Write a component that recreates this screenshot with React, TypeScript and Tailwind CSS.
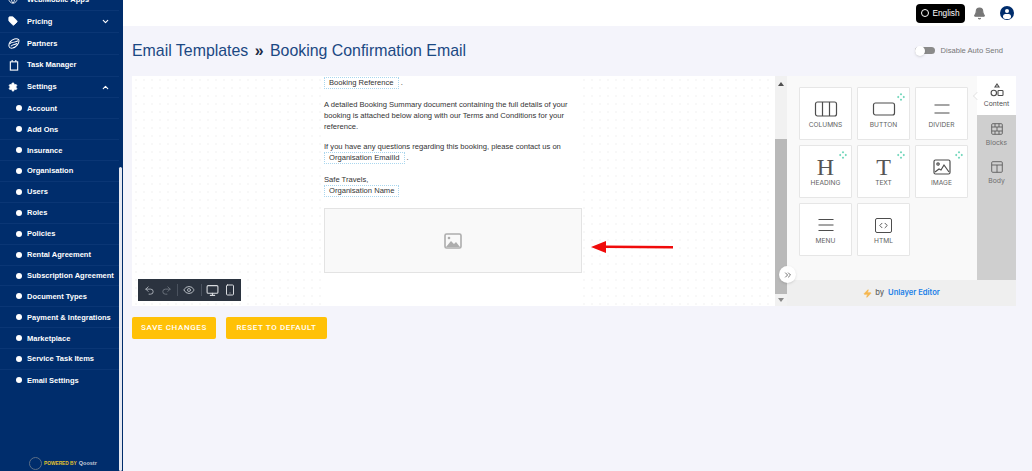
import { useState } from "react";
import { Bell, ChevronDown, ChevronUp, ChevronsRight, Code, Eye, Globe, Monitor, Redo2, Settings, Smartphone, Tag, Undo2, Zap } from "lucide-react";

const subItems = [
  "Account",
  "Add Ons",
  "Insurance",
  "Organisation",
  "Users",
  "Roles",
  "Policies",
  "Rental Agreement",
  "Subscription Agreement",
  "Document Types",
  "Payment & Integrations",
  "Marketplace",
  "Service Task Items",
  "Email Settings",
];

function NavRow({ icon, label, chevron }: { icon: React.ReactNode; label: string; chevron?: "up" | "down" }) {
  return (
    <div className="flex h-[21.9px] items-center border-b border-[#0a3675] pl-[8px] pr-[4px]">
      <span className="flex w-[18px] shrink-0 justify-start">{icon}</span>
      <span className="ml-[1px] flex-1 text-[7.5px] font-bold whitespace-nowrap text-white">{label}</span>
      {chevron === "down" && <ChevronDown className="mr-[5px] h-[9px] w-[9px] text-white" strokeWidth={3} />}
      {chevron === "up" && <ChevronUp className="mr-[5px] h-[9px] w-[9px] text-white" strokeWidth={3} />}
    </div>
  );
}

function Sidebar() {
  return (
    <aside className="relative flex h-[471px] w-[123px] shrink-0 flex-col overflow-hidden bg-[#002d6c]">
      <div className="-mt-[11px] w-[119px]">
        <NavRow icon={<Globe className="h-[10px] w-[10px] text-white" />} label="Web/Mobile Apps" />
        <NavRow icon={<Tag className="h-[10px] w-[10px] fill-white text-white" />} label="Pricing" chevron="down" />
        <NavRow
          icon={
            <svg viewBox="0 0 13 12" className="h-[11px] w-[12px] text-white" fill="none" stroke="currentColor" strokeWidth="1.1">
              <path d="M1 9c-.5-3 2-7 6-8 2.500-.5 5 0 5 2 0 3-3 7-7 8-2 .4-3.600-.4-4-2z" />
              <path d="M2 6c3-2 6-1 9-3M3 9c2-2 5-2 7-3" />
            </svg>
          }
          label="Partners"
        />
        <NavRow
          icon={
            <svg viewBox="0 0 10 12" className="ml-[1px] h-[11px] w-[10px] text-white" fill="none" stroke="currentColor" strokeWidth="1.2">
              <rect x="1" y="2" width="8" height="9" />
              <path d="M3 0v2M7 0v2" />
            </svg>
          }
          label="Task Manager"
        />
        <NavRow icon={<Settings className="h-[10px] w-[10px] fill-white text-white" />} label="Settings" chevron="up" />
        {subItems.map((item) => (
          <div key={item} className="flex h-[20.9px] items-center border-b border-[#0a3675] pl-[16px] last:border-b-0">
            <span className="h-[6px] w-[6px] rounded-full bg-white" />
            <span className="ml-[5px] text-[7.5px] font-bold whitespace-nowrap text-white">{item}</span>
          </div>
        ))}
      </div>
      <div className="absolute top-[167px] right-[1px] h-[304px] w-[3px] rounded-full bg-[#e6e8f0]" />
      <div className="absolute bottom-[1px] left-[29px] flex items-center gap-[2px]">
        <span className="h-[13px] w-[13px] rounded-full border border-[#5d6f86]" />
        <span className="text-[4.8px] font-bold text-[#e3c12d]">POWERED BY</span>
        <span className="text-[5.5px] font-bold text-[#c4cbd6]">Qoostr</span>
      </div>
    </aside>
  );
}

function Spark() {
  return (
    <svg viewBox="0 0 8 8" className="absolute top-[5px] right-[4px] h-[8px] w-[8px] text-[#63d2b4]" fill="currentColor">
      <path d="M1.200 2.800l1.200 1.200-1.200 1.200L0 4zM4 0l1.200 1.200L4 2.400 2.800 1.200zM6.800 2.800L8 4 6.800 5.200 5.600 4zM4 5.600l1.200 1.200L4 8 2.800 6.800z" />
    </svg>
  );
}

const tileStroke = { fill: "none", stroke: "#4d4d4d", strokeWidth: 1.2 };

const tiles: { label: string; spark?: boolean; icon: React.ReactNode }[] = [
  {
    label: "COLUMNS",
    icon: (
      <svg viewBox="0 0 24 16" className="h-[16px] w-[24px]" {...tileStroke}>
        <rect x="1.500" y="1" width="21" height="14" rx="2" />
        <path d="M8.500 1v14M15.500 1v14" />
      </svg>
    ),
  },
  {
    label: "BUTTON",
    spark: true,
    icon: (
      <svg viewBox="0 0 24 16" className="h-[16px] w-[24px]" {...tileStroke}>
        <rect x="1.500" y="2" width="21" height="12" rx="2" />
      </svg>
    ),
  },
  {
    label: "DIVIDER",
    icon: (
      <svg viewBox="0 0 24 16" className="h-[16px] w-[24px]" {...tileStroke}>
        <path d="M4.500 4h15M4.500 12h15" />
      </svg>
    ),
  },
  {
    label: "HEADING",
    spark: true,
    icon: <span className="font-['Liberation_Serif',serif] text-[24px] leading-[22px] text-[#555555]">H</span>,
  },
  {
    label: "TEXT",
    spark: true,
    icon: <span className="font-['Liberation_Serif',serif] text-[24px] leading-[22px] text-[#555555]">T</span>,
  },
  {
    label: "IMAGE",
    spark: true,
    icon: (
      <svg viewBox="0 0 18 16" className="h-[16px] w-[18px]" {...tileStroke}>
        <rect x="1" y="1" width="16" height="14" rx="1.500" />
        <circle cx="5" cy="5" r="1.200" />
        <path d="M2 13l4-3 2 1 3-5 5 7" />
      </svg>
    ),
  },
  {
    label: "MENU",
    icon: (
      <svg viewBox="0 0 24 16" className="h-[16px] w-[24px]" {...tileStroke}>
        <path d="M4.500 2.500h15M4.500 8h15M4.500 13.500h15" />
      </svg>
    ),
  },
  {
    label: "HTML",
    icon: (
      <span className="flex h-[15px] w-[17px] items-center justify-center rounded-[2px] border-[1.2px] border-[#4d4d4d]">
        <Code className="h-[9px] w-[9px] text-[#4d4d4d]" strokeWidth={2.4} />
      </span>
    ),
  },
];

function Tile({ label, spark, icon }: { label: string; spark?: boolean; icon: React.ReactNode }) {
  return (
    <div className="relative flex h-[53px] w-[53px] flex-col items-center justify-start rounded-[1px] border border-[#e6e6e6] bg-white pt-[13px]">
      {spark && <Spark />}
      <div className="flex h-[16px] items-center justify-center">{icon}</div>
      <span className="mt-[4px] text-[6.6px] leading-[8px] text-[#5f5f5f]">{label}</span>
    </div>
  );
}

function ToolPanel() {
  return (
    <div className="relative flex h-[230px] w-[229px] shrink-0 flex-col font-['Inter',sans-serif]">
      <div className="flex h-[204px]">
        <div className="grid flex-1 grid-cols-[repeat(3,53px)] content-start gap-x-[5px] gap-y-[5px] bg-[#f9f9f9] pt-[11px] pl-[12px]">
          {tiles.map((t) => (
            <Tile key={t.label} {...t} />
          ))}
        </div>
        <div className="w-[39px] shrink-0 bg-[#cfcfcf]">
          <div className="relative flex h-[39px] flex-col items-center bg-white pt-[7px]">
            <span className="absolute top-[17px] -left-[3px] h-[6px] w-[6px] rotate-45 border-b border-l border-[#e6e6e6] bg-white" />
            <svg viewBox="0 0 14 14" className="h-[14px] w-[14px]" fill="none" stroke="#4d4d4d" strokeWidth="1.100">
              <path d="M7 1l2 3H5z" />
              <circle cx="3.800" cy="10" r="2.700" />
              <rect x="8" y="7.500" width="5" height="5" rx="0.800" />
            </svg>
            <span className="mt-[3px] text-[6.8px] leading-[8px] text-[#505050]">Content</span>
          </div>
          <div className="flex h-[38px] flex-col items-center pt-[8px]">
            <svg viewBox="0 0 12 12" className="h-[12px] w-[12px]" fill="none" stroke="#5c5c5c" strokeWidth="0.900">
              <rect x="0.700" y="0.700" width="10.600" height="10.600" rx="1" />
              <path d="M0.700 4h10.600M0.700 8h10.600M4 0.700V4M8 0.700V4M6 4v4M4 8v3.300M8 8v3.300" />
            </svg>
            <span className="mt-[4px] text-[6.8px] leading-[8px] text-[#707070]">Blocks</span>
          </div>
          <div className="flex h-[38px] flex-col items-center pt-[8px]">
            <svg viewBox="0 0 12 12" className="h-[12px] w-[12px]" fill="none" stroke="#5c5c5c" strokeWidth="0.900">
              <rect x="0.700" y="0.700" width="10.600" height="10.600" rx="1" />
              <path d="M0.700 4h10.600M6 4v7.300" />
            </svg>
            <span className="mt-[4px] text-[6.8px] leading-[8px] text-[#707070]">Body</span>
          </div>
        </div>
      </div>
      <div className="flex h-[26px] items-center justify-center gap-[3px] bg-[#efefef] text-[7.6px]">
        <Zap className="h-[9px] w-[9px] fill-[#f5b74f] text-[#f5b74f]" />
        <span className="font-medium text-[#666666]">by</span>
        <span className="ml-[1px] font-semibold text-[#2080e8]">Unlayer Editor</span>
      </div>
    </div>
  );
}

function Token({ children }: { children: React.ReactNode }) {
  return (
    <span className="inline-block border border-dotted border-[#a9d6ee] px-[4px] leading-[10px] text-[#333333]">{children}</span>
  );
}

function Canvas() {
  return (
    <div className="relative h-[230px] flex-1 overflow-hidden bg-white bg-[radial-gradient(#f8f8f8_1px,transparent_1px)] bg-[length:8px_8px]">
      <div className="ml-[192px] h-full w-[258px] bg-white font-['Liberation_Sans',sans-serif] text-[7.6px] leading-[10.8px] text-[#333333]">
        <div className="pt-[1px]">
          <Token>Booking Reference</Token> .
        </div>
        <p className="mt-[11px]">
          A detailed Booking Summary document containing the full details of your booking is attached below along with our Terms and Conditions for your reference.
        </p>
        <p className="mt-[9.5px]">If you have any questions regarding this booking, please contact us on</p>
        <div className="-mt-[1px]">
          <Token>Organisation EmailId</Token> .
        </div>
        <p className="mt-[11px]">Safe Travels,</p>
        <div>
          <Token>Organisation Name</Token>
        </div>
        <div className="mt-[11px] flex h-[65px] items-center justify-center border border-[#e3e3e3] bg-[#f9f9f9]">
          <svg viewBox="0 0 18 16" className="h-[16px] w-[18px]" fill="none" stroke="#adadad" strokeWidth="1.600">
            <rect x="1" y="1" width="16" height="14" rx="1.500" />
            <circle cx="5" cy="5" r="1.300" fill="#adadad" stroke="none" />
            <path d="M2 14l5-6 3 3 2-2 4 5z" fill="#adadad" stroke="none" />
          </svg>
        </div>
      </div>
      {/* undo / preview toolbar */}
      <div className="absolute top-[203px] left-[6px] flex h-[22px] w-[103px] items-center bg-[#2b333f] pl-[6px]">
        <Undo2 className="h-[11px] w-[11px] text-[#aeb4bb]" />
        <Redo2 className="ml-[6px] h-[11px] w-[11px] text-[#6e7680]" />
        <span className="ml-[5px] h-[12px] w-px bg-[#4a525e]" />
        <Eye className="ml-[5px] h-[12px] w-[12px] text-[#aeb4bb]" />
        <span className="ml-[6px] h-[12px] w-px bg-[#4a525e]" />
        <Monitor className="ml-[4px] h-[13px] w-[13px] text-[#d8dbdf]" />
        <Smartphone className="ml-[5px] h-[12px] w-[12px] text-[#d8dbdf]" />
      </div>
    </div>
  );
}

export default function App() {
  const [autoSend] = useState(false);

  return (
    <div className="flex h-[471px] w-[1032px] overflow-hidden bg-[#f4f4fb] font-['Liberation_Sans',sans-serif]">
      <Sidebar />
      <div className="relative flex min-w-0 flex-1 flex-col">
        <header className="flex h-[26px] items-center justify-end bg-white pr-[18px]">
          <div className="flex h-[19px] w-[49px] items-center justify-center gap-[3px] rounded-[4px] bg-black text-[8.3px] text-white">
            <span className="h-[8px] w-[8px] rounded-full border-[1.5px] border-white" />
            English
          </div>
          <Bell className="ml-[8px] h-[13px] w-[13px] fill-[#777777] text-[#777777]" />
          <span className="relative ml-[14px] flex h-[14px] w-[14px] items-center justify-center overflow-hidden rounded-full bg-[#002d6c]">
            <span className="absolute top-[3px] h-[4px] w-[4px] rounded-full bg-white" />
            <span className="absolute top-[8px] h-[5px] w-[8px] rounded-full bg-white" />
          </span>
        </header>

        <div className="flex h-[50px] items-center pr-[29px] pl-[9px]">
          <h1 className="flex-1 text-[15.9px] text-[#1b4883]">
            Email Templates <span className="mx-[2px] font-bold text-[#1a2a44]">»</span> Booking Confirmation Email
          </h1>
          <div className="flex items-center text-[7.6px] text-[#777777]">
            <span className="relative mr-[6px] h-[7px] w-[20px] rounded-full bg-[#8a8a8a]">
              <span className="absolute -top-[1.5px] left-0 h-[10px] w-[10px] rounded-full bg-white shadow" />
            </span>
            {autoSend ? "Enable Auto Send" : "Disable Auto Send"}
          </div>
        </div>

        <div className="ml-[9px] flex h-[230px] w-[884px]">
          <Canvas />
          <div className="relative w-[12px] shrink-0 bg-[#f1f1f1]">
            <span className="absolute top-[6px] left-[3px] h-0 w-0 border-x-[3px] border-b-[4px] border-x-transparent border-b-[#505050]" />
            <div className="absolute top-[63px] left-0 h-[155px] w-[12px] bg-[#b9b9b9]" />
            <span className="absolute bottom-[4px] left-[3px] h-0 w-0 border-x-[3px] border-t-[4px] border-x-transparent border-t-[#888888]" />
          </div>
          <ToolPanel />
        </div>

        <div className="mt-[11px] ml-[9px] flex gap-[10px]">
          <button className="h-[22px] w-[84px] rounded-[2px] bg-[#ffc107] font-['Roboto',sans-serif] text-[8px] font-medium tracking-[0.08em] text-white">SAVE CHANGES</button>
          <button className="h-[22px] w-[101px] rounded-[2px] bg-[#ffc107] font-['Roboto',sans-serif] text-[8px] font-medium tracking-[0.08em] text-white">RESET TO DEFAULT</button>
        </div>

        {/* annotation arrow over the editor */}
        <svg viewBox="0 0 84 14" className="absolute top-[240px] left-[468px] h-[14px] w-[84px]">
          <path d="M0 7L15 1v4.600l67 .4v2.400l-67-.4V13z" fill="#f00b0b" />
        </svg>
        <span className="absolute top-[266px] left-[656px] flex h-[17px] w-[17px] items-center justify-center rounded-full bg-white shadow-sm">
          <ChevronsRight className="h-[10px] w-[10px] text-[#555555]" />
        </span>
      </div>
    </div>
  );
}
